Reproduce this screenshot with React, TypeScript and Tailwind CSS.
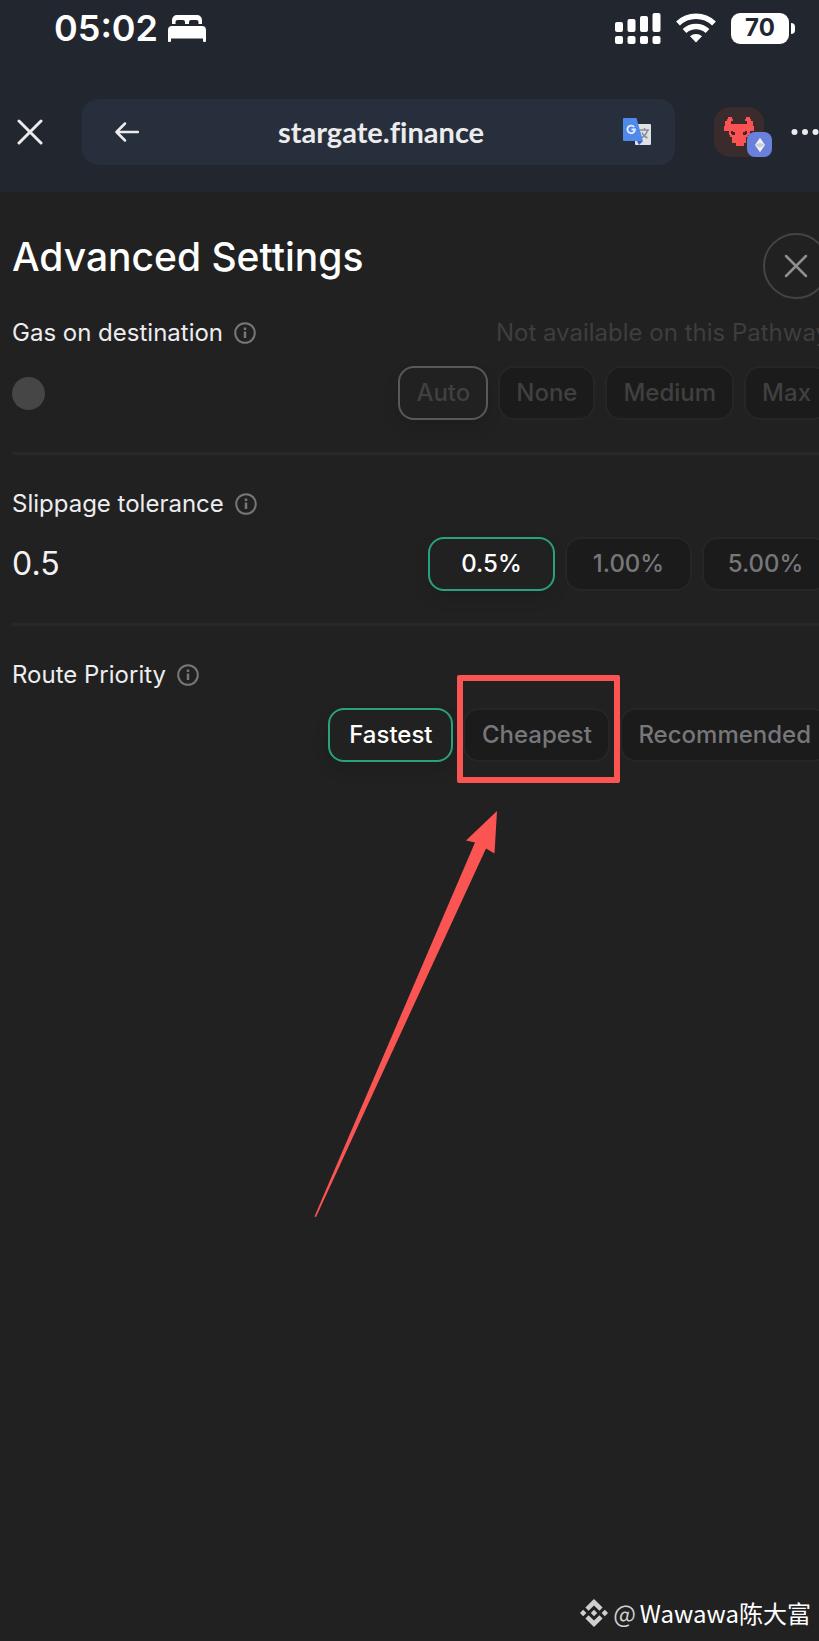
import { useState } from 'react'
import type { ReactNode } from 'react'
import clsx from 'clsx'

function StatusBar() {
  return (
    <div className="flex items-center justify-between h-14 pl-[54px] pr-6 text-white">
      <div className="flex items-center gap-[10px]">
        <span className="text-[36px] leading-10 font-semibold">05:02</span>
        <svg width="38" height="27" viewBox="0 0 38 27" fill="currentColor" aria-hidden="true">
          <path d="M4 9V5a5 5 0 0 1 5-5h20a5 5 0 0 1 5 5v4h-3.500V7a2 2 0 0 0-2-2H23a2 2 0 0 0-2 2v2h-4V7a2 2 0 0 0-2-2H9.500a2 2 0 0 0-2 2v2z" />
          <path d="M0 26V15a4 4 0 0 1 4-4h30a4 4 0 0 1 4 4v11a1 1 0 0 1-1 1h-1a1 1 0 0 1-1-1v-2.500H3V26a1 1 0 0 1-1 1H1a1 1 0 0 1-1-1z" />
        </svg>
      </div>
      <div className="flex items-center gap-[15px]">
        <svg width="46" height="31" viewBox="0 0 46 31" fill="currentColor" aria-hidden="true">
          <rect x="0" y="9" width="8" height="10" rx="2" />
          <rect x="12.500" y="6" width="8" height="13" rx="2" />
          <rect x="25" y="3" width="8" height="16" rx="2" />
          <rect x="37.500" y="0" width="8" height="19" rx="2" />
          <rect x="0" y="23" width="8" height="8" rx="2" />
          <rect x="12.500" y="23" width="8" height="8" rx="2" />
          <rect x="25" y="23" width="8" height="8" rx="2" />
          <rect x="37.500" y="23" width="8" height="8" rx="2" />
        </svg>
        <svg width="40" height="30" viewBox="0 0 40 30" fill="none" stroke="currentColor" aria-hidden="true">
          <path d="M2 10.500a26 26 0 0 1 36 0" strokeWidth="5.500" />
          <path d="M8.500 18a17 17 0 0 1 23 0" strokeWidth="5.500" />
          <path d="M20 29.500l-6-6.200a8.800 8.800 0 0 1 12 0z" fill="currentColor" stroke="none" />
        </svg>
        <div className="flex items-center gap-[2px]">
          <span className="flex items-center justify-center w-[58px] h-[31px] rounded-[9px] bg-white text-[#22262f] text-[24px] leading-7 font-bold">
            70
          </span>
          <span className="w-1 h-[11px] rounded-r-full bg-white" />
        </div>
      </div>
    </div>
  )
}

function TranslateIcon() {
  return (
    <svg width="28" height="28" viewBox="0 0 28 28" aria-hidden="true">
      <rect x="12" y="6" width="16" height="21" rx="1" fill="#dfe1e4" />
      <path d="M17 12h9M21.500 10v2M24.500 12c-.8 4-3.500 6.500-6.500 8M19 14.500c1 2.500 3 4.500 5.500 5.500" stroke="#8a8f96" strokeWidth="1.500" fill="none" />
      <path d="M14 23h6l-4 4z" fill="#3c5fb5" />
      <path d="M1 0h12.500l6.500 23H1a1 1 0 0 1-1-1V1a1 1 0 0 1 1-1z" fill="#5089ec" />
      <path d="M11.200 9A3.800 3.800 0 1 0 12 11.500H8.500" stroke="#e8eefb" strokeWidth="1.800" fill="none" />
    </svg>
  )
}

function WalletAvatar() {
  return (
    <button type="button" aria-label="Wallet" className="relative shrink-0 size-[50px] rounded-2xl bg-[#3a2c2d]">
      <svg className="absolute left-[10px] top-[10px]" width="30" height="30" viewBox="0 0 30 30" fill="#fb5353" aria-hidden="true">
        <path d="M4 0h4v2h1v2H7v3h16V4h-2V2h1V0h4v2h1v2h2v5h1v5h-4v4h-2v2h-2v6h-2v3h-8v-3H8v-6H6v-2H5v-4H0V9h1V4h2V2h1z" />
        <path d="M7 14h2v1h2v3H8v-1H7zM23 14h-2v1h-2v3h3v-1h1z" fill="#3a2c2d" />
      </svg>
      <span className="absolute left-[33px] top-[25px] flex items-center justify-center size-[25px] rounded-lg bg-[#6a80dd]">
        <svg width="10" height="16" viewBox="0 0 11 16" aria-hidden="true">
          <path d="M5.500 0L11 8l-5.500 8L0 8z" fill="#f0f2fa" />
          <path d="M5.500 5.500L11 8l-5.500 3L0 8z" fill="#c9cdd8" />
        </svg>
      </span>
    </button>
  )
}

function BrowserBar() {
  return (
    <div className="flex items-center h-[66px] mt-[43px] pl-[17px] overflow-hidden">
      <button type="button" aria-label="Close browser" className="shrink-0 text-[#ececee]">
        <svg width="26" height="26" viewBox="0 0 26 26" stroke="currentColor" strokeWidth="3" strokeLinecap="round" aria-hidden="true">
          <path d="M2 2l22 22M24 2L2 24" />
        </svg>
      </button>
      <div className="flex items-center flex-1 h-full ml-[39px] pl-[33px] pr-6 rounded-2xl bg-[#282f3c]">
        <button type="button" aria-label="Back" className="text-[#ececee]">
          <svg width="24" height="20" viewBox="0 0 24 20" fill="none" stroke="currentColor" strokeWidth="2.500" strokeLinecap="round" strokeLinejoin="round" aria-hidden="true">
            <path d="M23 10H1.500M10 1.500L1.500 10l8.500 8.500" />
          </svg>
        </button>
        <span className="flex-1 text-center text-[29px] leading-9 font-bold text-[#ececee] font-['Lato',sans-serif] [font-variant-ligatures:none]">
          stargate.finance
        </span>
        <button type="button" aria-label="Translate">
          <TranslateIcon />
        </button>
      </div>
      <div className="flex items-center ml-[39px]">
        <WalletAvatar />
        <button type="button" aria-label="More" className="ml-[27px] text-[#ececee]">
          <svg width="28" height="8" viewBox="0 0 28 8" fill="currentColor" aria-hidden="true">
            <circle cx="3.500" cy="4" r="3" />
            <circle cx="14" cy="4" r="3" />
            <circle cx="24.500" cy="4" r="3" />
          </svg>
        </button>
      </div>
    </div>
  )
}

function InfoIcon() {
  return (
    <svg width="22" height="22" viewBox="0 0 22 22" fill="none" stroke="#77777a" strokeWidth="2" aria-hidden="true">
      <circle cx="11" cy="11" r="9.800" />
      <path d="M11 9.500v6.500" strokeWidth="2.500" />
      <path d="M11 5.500v2.500" strokeWidth="2.500" />
    </svg>
  )
}

function Setting({ title, note, htmlFor, value, children }: {
  title: string
  note?: string
  htmlFor?: string
  value?: ReactNode
  children: ReactNode
}) {
  return (
    <section className="py-8 first:pt-0 border-b-[3px] border-[#282828] last:border-b-0">
      <div className="flex items-center justify-between h-[34px] text-[24px] leading-8 whitespace-nowrap">
        <div className="flex items-center gap-[11px] text-[#ededf0]">
          {htmlFor ? <label htmlFor={htmlFor}>{title}</label> : <h2>{title}</h2>}
          <InfoIcon />
        </div>
        {note && <span className="text-[#3e3e3e]">{note}</span>}
      </div>
      <div className="flex items-center justify-between mt-4">
        <div>{value}</div>
        <div className="flex gap-[10px]">{children}</div>
      </div>
    </section>
  )
}

function Option({ label, active, disabled, className, onClick }: {
  label: string
  active?: boolean
  disabled?: boolean
  className?: string
  onClick?: () => void
}) {
  return (
    <button
      type="button"
      disabled={disabled}
      onClick={onClick}
      className={clsx(
        'h-[54px] px-4 rounded-2xl border-2 text-[24px] leading-8 font-medium whitespace-nowrap',
        active ? 'bg-[#212121] shadow-[0_8px_16px_rgba(0,0,0,0.1)]' : 'bg-[#1b1b1b] border-[#262626]',
        active && (disabled ? 'border-[#59595c]' : 'border-[#27a17f]'),
        disabled ? 'text-[#404040]' : active ? 'text-white' : 'text-[#77777a]',
        className,
      )}
    >
      {label}
    </button>
  )
}

function Highlight() {
  return (
    <div className="pointer-events-none" aria-hidden="true">
      <div className="absolute -left-[6px] -right-[10px] -top-[33px] -bottom-[21px] border-6 border-[#fb5553] rounded-xs" />
      <svg className="absolute -left-[149px] top-[103px]" width="184" height="408" viewBox="0 0 184 408" fill="#fb5553">
        <path d="M183 0L152 29.500l9 2L.5 405.500l1.500.5L172 37.500l8.500 5z" />
      </svg>
    </div>
  )
}

export default function App() {
  const [slippage, setSlippage] = useState('0.5')
  const [route, setRoute] = useState('Fastest')

  const presets = [
    { label: '0.5%', value: '0.5' },
    { label: '1.00%', value: '1.00' },
    { label: '5.00%', value: '5.00' },
  ]

  return (
    <div className="flex flex-col min-h-screen overflow-hidden bg-[#212121] font-['Inter',sans-serif]">
      <header className="pb-[27px] bg-[#22262f]">
        <StatusBar />
        <BrowserBar />
      </header>

      <main className="pl-3 -mr-[10px] pt-[41px]">
        <div className="flex items-start justify-between h-[83px]">
          <h1 className="text-[39px] leading-12 font-medium text-white">Advanced Settings</h1>
          <button
            type="button"
            aria-label="Close settings"
            className="flex items-center justify-center size-[66px] rounded-full border-2 border-[#444444] text-[#8f8f90]"
          >
            <svg width="24" height="24" viewBox="0 0 24 24" stroke="currentColor" strokeWidth="2.500" strokeLinecap="round" aria-hidden="true">
              <path d="M2 2l20 20M22 2L2 22" />
            </svg>
          </button>
        </div>

        <div>
          <Setting
            title="Gas on destination"
            note="Not available on this Pathway"
            value={<div className="size-[33px] rounded-full bg-[#464646]" />}
          >
            <Option label="Auto" active disabled />
            <Option label="None" disabled />
            <Option label="Medium" disabled />
            <Option label="Max" disabled />
          </Setting>

          <Setting
            title="Slippage tolerance"
            htmlFor="slippage"
            value={
              <input
                id="slippage"
                value={slippage}
                onChange={e => setSlippage(e.target.value)}
                className="w-40 bg-transparent text-[32px] leading-10 text-[#f2f2f4] outline-none"
              />
            }
          >
            {presets.map(p => (
              <Option
                key={p.value}
                label={p.label}
                className="w-[127px]"
                active={slippage === p.value}
                onClick={() => setSlippage(p.value)}
              />
            ))}
          </Setting>

          <Setting title="Route Priority">
            <Option label="Fastest" className="w-[125px]" active={route === 'Fastest'} onClick={() => setRoute('Fastest')} />
            <div className="relative">
              <Option label="Cheapest" className="w-[147px]" active={route === 'Cheapest'} onClick={() => setRoute('Cheapest')} />
              <Highlight />
            </div>
            <Option label="Recommended" active={route === 'Recommended'} onClick={() => setRoute('Recommended')} />
          </Setting>
        </div>
      </main>

      <footer className="flex items-center justify-end mt-auto pr-2 pb-[10px] text-[24px] leading-9 text-white font-['Noto_Sans_CJK_SC',sans-serif]">
        <svg className="mr-[5px]" width="28" height="28" viewBox="0 0 28 28" fill="#cfcfcf" aria-hidden="true">
          <path d="M14 0l8.600 8.600-3.200 3.200L14 6.400l-5.400 5.400-3.200-3.200z" />
          <path d="M14 28l8.600-8.600-3.200-3.200L14 21.600l-5.400-5.400-3.200 3.200z" />
          <path d="M14 10.800l3.200 3.200-3.200 3.200-3.200-3.200zM3.200 10.800L6.400 14l-3.200 3.200L0 14zM24.800 10.800L28 14l-3.200 3.200-3.200-3.200z" />
        </svg>
        <span className="mr-1 text-[#cfcfcf]">@</span>
        <span>Wawawa陈大富</span>
      </footer>
    </div>
  )
}
